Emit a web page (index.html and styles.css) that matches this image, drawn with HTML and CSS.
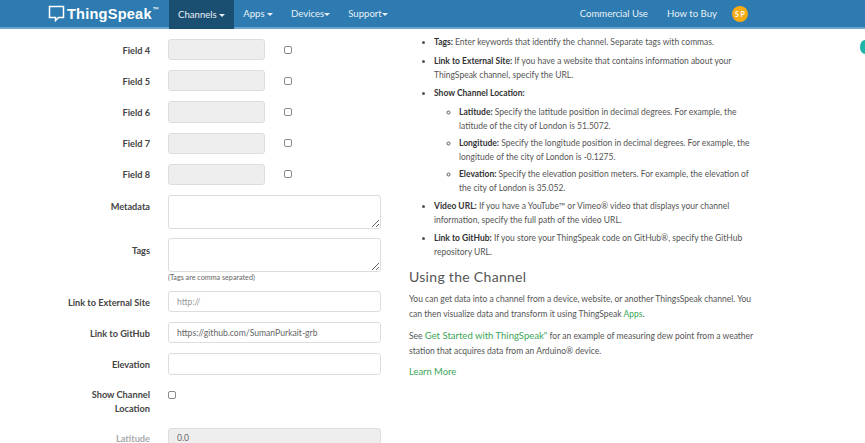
FILE: index.html
```html
<!DOCTYPE html>
<html lang="en">
<head>
<meta charset="UTF-8">
<title>ThingSpeak Channel Settings</title>
<link rel="stylesheet" href="styles.css">
</head>
<body>
  <nav class="navbar">
    <a class="brand" href="#">
      <svg class="brand-icon" width="17" height="17" viewBox="0 0 17 17">
        <path d="M1.5 1.5H15.5V12.5H10.5L7.5 15.5V12.5H1.5Z" fill="none" stroke="#fff" stroke-width="1.5"/>
      </svg>
      <span class="brand-name">ThingSpeak</span><span class="brand-tm">™</span>
    </a>
    <ul class="nav-left">
      <li class="active"><a href="#">Channels <i class="caret"></i></a></li>
      <li><a href="#">Apps <i class="caret"></i></a></li>
      <li><a href="#">Devices<i class="caret"></i></a></li>
      <li><a href="#">Support<i class="caret"></i></a></li>
    </ul>
    <ul class="nav-right">
      <li><a href="#">Commercial Use</a></li>
      <li><a href="#">How to Buy</a></li>
      <li class="user"><span class="avatar">S P</span></li>
    </ul>
  </nav>

  <div class="page">
    <form class="settings">
      <div class="row"><label>Field 4</label><input class="short" type="text" disabled><input class="check" type="checkbox"></div>
      <div class="row"><label>Field 5</label><input class="short" type="text" disabled><input class="check" type="checkbox"></div>
      <div class="row"><label>Field 6</label><input class="short" type="text" disabled><input class="check" type="checkbox"></div>
      <div class="row"><label>Field 7</label><input class="short" type="text" disabled><input class="check" type="checkbox"></div>
      <div class="row"><label>Field 8</label><input class="short" type="text" disabled><input class="check" type="checkbox"></div>
      <div class="row metadata"><label>Metadata</label><textarea></textarea></div>
      <div class="row with-help">
        <label>Tags</label>
        <div class="control"><textarea></textarea><small>(Tags are comma separated)</small></div>
      </div>
      <div class="row"><label>Link to External Site</label><input type="text" placeholder="http://"></div>
      <div class="row"><label>Link to GitHub</label><input type="text" value="https://github.com/SumanPurkait-grb"></div>
      <div class="row"><label>Elevation</label><input type="text"></div>
      <div class="row location"><label>Show Channel<br>Location</label><input class="check" type="checkbox"></div>
      <div class="row"><label class="muted">Latitude</label><input type="text" value="0.0" disabled></div>
    </form>

    <div class="help">
      <ul class="topics">
        <li><b>Tags:</b> Enter keywords that identify the channel. Separate tags with commas.</li>
        <li><b>Link to External Site:</b> If you have a website that contains information about your ThingSpeak channel, specify the URL.</li>
        <li class="has-sublist"><b>Show Channel Location:</b>
          <ul>
            <li><b>Latitude:</b> Specify the latitude position in decimal degrees. For example, the latitude of the city of London is 51.5072.</li>
            <li><b>Longitude:</b> Specify the longitude position in decimal degrees. For example, the longitude of the city of London is -0.1275.</li>
            <li><b>Elevation:</b> Specify the elevation position meters. For example, the elevation of<br>the city of London is 35.052.</li>
          </ul>
        </li>
        <li><b>Video URL:</b> If you have a YouTube™ or Vimeo® video that displays your channel information, specify the full path of the video URL.</li>
        <li><b>Link to GitHub:</b> If you store your ThingSpeak code on GitHub®, specify the GitHub repository URL.</li>
      </ul>
      <h3>Using the Channel</h3>
      <p>You can get data into a channel from a device, website, or another ThingsSpeak channel. You can then visualize data and transform it using ThingSpeak <a href="#">Apps</a>.</p>
      <p class="see">See <a class="wide-link" href="#">Get Started with ThingSpeak"</a> for an example of measuring dew point from a weather station that acquires data from an Arduino® device.</p>
      <p><a class="more" href="#">Learn More</a></p>
    </div>
    <span class="side-tab"></span>
  </div>
</body>
</html>
```

FILE: styles.css
```css
html, body {
  margin: 0;
  height: 443px;
  overflow: hidden;
}
body {
  font-family: "Lato", sans-serif;
  font-size: 8.5px;
  color: #555;
  background: #fff;
}
a {
  text-decoration: none;
}

/* Top bar */
.navbar {
  display: flex;
  align-items: stretch;
  height: 27px;
  padding-left: 48px;
  font-size: 9.6px;
  background: #2d7bb0;
  border-bottom: 2px solid #6ba5cd;
}
.navbar a {
  color: #e8f1f7;
}
.navbar ul {
  display: flex;
  margin: 0;
  padding: 0;
  list-style: none;
}
.navbar li {
  display: flex;
  align-items: center;
}
.brand {
  display: flex;
  align-items: center;
  width: 121px;
}
.brand-icon {
  margin-right: 2px;
}
.brand-name {
  font-family: "Liberation Sans", sans-serif;
  font-size: 14.6px;
  font-weight: bold;
  letter-spacing: 0.2px;
  color: #fff;
}
.brand-tm {
  align-self: flex-start;
  margin: 5px 0 0 1px;
  font-size: 8px;
  color: #fff;
}
.nav-left li {
  padding: 0 9px;
}
.nav-left li.active {
  padding: 0 9px;
  height: 29px;
  background: #1b4f72;
}
.caret {
  display: inline-block;
  vertical-align: middle;
  border-top: 3px solid #e8f1f7;
  border-left: 3px solid transparent;
  border-right: 3px solid transparent;
}
.navbar .nav-right {
  margin-left: auto;
  margin-right: 117px;
}
.nav-right li {
  margin-left: 19px;
}
.nav-right li.user {
  margin-left: 15px;
}
.avatar {
  display: flex;
  align-items: center;
  justify-content: center;
  width: 16px;
  height: 16px;
  border-radius: 50%;
  font-size: 7px;
  font-weight: bold;
  color: #fff;
  background: #f5ab14;
}

/* Page columns */
.page {
  display: flex;
  position: relative;
}
.settings {
  width: 381px;
  padding-top: 10px;
  flex-shrink: 0;
}
.help {
  width: 356px;
  margin-left: 28px;
  padding-top: 6px;
  line-height: 14px;
}

/* Form */
.row {
  display: grid;
  grid-template-columns: 150px 1fr;
  column-gap: 18px;
  margin-bottom: 10px;
  align-items: center;
}
.row label {
  padding-top: 1px;
  text-align: right;
  font-size: 9.2px;
  font-weight: 700;
  color: #444;
}
.row label.muted {
  color: #aaa;
}
.row input[type="text"], .row textarea {
  box-sizing: border-box;
  width: 213px;
  height: 21.2px;
  margin: 0;
  padding: 0 8px;
  font-family: inherit;
  font-size: 8.6px;
  color: #666;
  border: 1px solid #ddd;
  border-radius: 3px;
  background: #fff;
}
.row input::placeholder {
  color: #999;
}
.row input[disabled] {
  background: #eee;
}
.row input.short {
  width: 97px;
}
.row textarea {
  display: block;
  height: 34px;
}
.metadata, .with-help {
  align-items: start;
}
.metadata label, .with-help label {
  margin-top: 5px;
}
.metadata {
  margin-bottom: 9px;
}
.with-help {
  margin-bottom: 9px;
}
.with-help label {
  margin-top: 6px;
}
.control small {
  display: block;
  margin-top: 1px;
  font-size: 7.2px;
  line-height: 9px;
  color: #666;
}
.row:has(> .short) {
  grid-template-columns: 150px 97px 1fr;
  column-gap: 18px;
}
.row .check {
  appearance: none;
  box-sizing: border-box;
  width: 8px;
  height: 8px;
  margin: 0 0 0 1px;
  border: 1px solid #8a8a8a;
  border-radius: 2px;
  background: #fff;
}
.location {
  align-items: start;
  margin-bottom: 12px;
}
.location label {
  padding-top: 3px;
  line-height: 14px;
}
.row.location .check {
  margin: 6px 0 0;
}

/* Help text */
.topics {
  margin: 0;
  padding: 0 4px 0 25px;
}
.topics ul {
  margin: 4.5px 0 0;
  padding-left: 25px;
  list-style: circle;
}
.topics li {
  margin-bottom: 4.5px;
}
.topics ul li {
  margin-bottom: 3px;
}
.topics li.has-sublist {
  margin-bottom: 4px;
}
.help b {
  font-weight: 700;
  color: #333;
}
.help h3 {
  margin: 11px 0 8px;
  font-family: "Lato", sans-serif;
  font-size: 14px;
  font-weight: 400;
  letter-spacing: 0.3px;
  color: #555;
}
.help p {
  margin: 0 0 6px;
  line-height: 15px;
}
.help p.see {
  margin-bottom: 5px;
}
.help a {
  color: #3aa655;
}
.help a.wide-link {
  font-size: 9.5px;
}
.help a.more {
  font-size: 9.4px;
}
.side-tab {
  position: absolute;
  top: 11px;
  right: -5px;
  width: 10px;
  height: 14px;
  border-radius: 50%;
  background: #1cb5a8;
}
```
